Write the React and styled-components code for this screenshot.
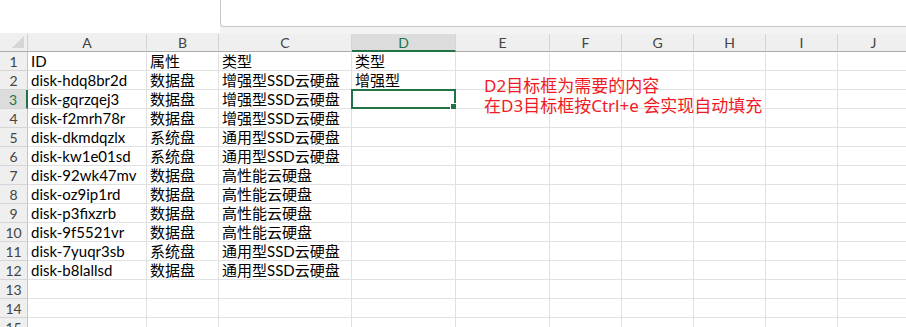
import React from "react";
import styled, { createGlobalStyle } from "styled-components";

const GREEN = "#217346";

const Global = createGlobalStyle`
  html, body { margin: 0; padding: 0; background: #fff; overflow: hidden; }
  body { font-family: Lato, "Noto Sans CJK SC", sans-serif; }
  * { box-sizing: border-box; }
`;

const Page = styled.div`
  position: relative;
  width: 906px;
  height: 327px;
  overflow: hidden;
`;

const TopBar = styled.div`
  display: flex;
  height: 34px;
`;

const TopLeft = styled.div`
  width: 220px;
  background: #fff;
  border-bottom: 1px solid #f0f0f0;
`;

const TopRight = styled.div`
  flex: 1;
  display: flex;
  flex-direction: column;
  background: #f3f3f3;
`;

const FormulaBox = styled.div`
  height: 27px;
  margin-right: -10px;
  background: #fff;
  border-left: 1px solid #c6c6c6;
  border-bottom: 1px solid #c6c6c6;
  border-bottom-left-radius: 4px;
`;

const COLS = [28, 119, 72, 133, 104, 94, 72, 72, 72, 72, 72];
const LETTERS = ["A", "B", "C", "D", "E", "F", "G", "H", "I", "J"];

const Grid = styled.div`
  display: grid;
  grid-template-columns: ${COLS.map((c) => c + "px").join(" ")};
  grid-template-rows: 18px repeat(15, 19px);
`;

const Cell = styled.div`
  position: relative;
  height: 100%;
  border-right: 1px solid #e1e1e1;
  border-bottom: 1px solid #e1e1e1;
  font-size: 15px;
  line-height: 19px;
  color: #000;
  padding-left: 3px;
  white-space: nowrap;
  background: #fff;
`;

const Corner = styled.div`
  position: relative;
  background: #efefef;
  border-right: 1px solid #d0d0d0;
  border-bottom: 1px solid #ababab;
  svg { position: absolute; right: 3px; bottom: 3px; }
`;

const ColHead = styled.div`
  background: ${(p) => (p.$active ? "#dcdcdc" : "#efefef")};
  border-right: 1px solid #d5d5d5;
  border-bottom: ${(p) => (p.$active ? `2px solid ${GREEN}` : "1px solid #ababab")};
  color: ${(p) => (p.$active ? GREEN : "#444")};
  font-size: 14px;
  line-height: 18px;
  text-align: center;
`;

const RowHead = styled.div`
  background: ${(p) => (p.$active ? "#dcdcdc" : "#efefef")};
  border-right: ${(p) => (p.$active ? `2px solid ${GREEN}` : "1px solid #c4c4c4")};
  border-bottom: 1px solid #d5d5d5;
  color: ${(p) => (p.$active ? GREEN : "#444")};
  font-size: 14px;
  line-height: 19px;
  text-align: center;
`;

const Selection = styled.div`
  position: absolute;
  left: -1px;
  top: -1px;
  right: -1px;
  bottom: -1px;
  border: 2px solid ${GREEN};
  &::after {
    content: "";
    position: absolute;
    right: -4px;
    bottom: -4px;
    width: 6px;
    height: 6px;
    background: ${GREEN};
    border: 1px solid #fff;
  }
`;

const Note = styled.div`
  position: absolute;
  left: 484px;
  top: 76px;
  color: #f01a25;
  font-family: "Noto Sans", "Noto Sans CJK SC", sans-serif;
  font-size: 17px;
  line-height: 20px;
  white-space: nowrap;
`;

const NoteLine = styled.div`
  height: 20px;
`;

const DATA = [
  ["ID", "属性", "类型", "类型"],
  ["disk-hdq8br2d", "数据盘", "增强型SSD云硬盘", "增强型"],
  ["disk-gqrzqej3", "数据盘", "增强型SSD云硬盘"],
  ["disk-f2mrh78r", "数据盘", "增强型SSD云硬盘"],
  ["disk-dkmdqzlx", "系统盘", "通用型SSD云硬盘"],
  ["disk-kw1e01sd", "系统盘", "通用型SSD云硬盘"],
  ["disk-92wk47mv", "数据盘", "高性能云硬盘"],
  ["disk-oz9ip1rd", "数据盘", "高性能云硬盘"],
  ["disk-p3fixzrb", "数据盘", "高性能云硬盘"],
  ["disk-9f5521vr", "数据盘", "高性能云硬盘"],
  ["disk-7yuqr3sb", "系统盘", "通用型SSD云硬盘"],
  ["disk-b8lallsd", "数据盘", "通用型SSD云硬盘"],
  [],
  [],
  [],
];

export default function App() {
  return (
    <Page>
      <Global />
      <TopBar>
        <TopLeft />
        <TopRight>
          <FormulaBox />
        </TopRight>
      </TopBar>
      <Grid>
        <Corner>
          <svg width="12" height="12" viewBox="0 0 12 12">
            <polygon points="12,0 12,12 0,12" fill="#d6d6d6" />
          </svg>
        </Corner>
        {LETTERS.map((l) => (
          <ColHead key={l} $active={l === "D"}>
            {l}
          </ColHead>
        ))}
        {DATA.map((row, r) => (
          <React.Fragment key={r}>
            <RowHead $active={r === 2}>{r + 1}</RowHead>
            {LETTERS.map((l, c) => (
              <Cell key={l}>
                {row[c] || ""}
                {r === 2 && c === 3 && <Selection />}
              </Cell>
            ))}
          </React.Fragment>
        ))}
      </Grid>
      <Note>
        <NoteLine>D2目标框为需要的内容</NoteLine>
        <NoteLine>在D3目标框按Ctrl+e 会实现自动填充</NoteLine>
      </Note>
    </Page>
  );
}
